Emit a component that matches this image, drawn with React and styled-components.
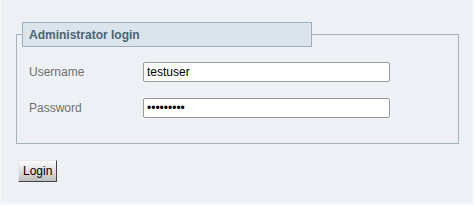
import React from 'react';
import styled, { createGlobalStyle } from 'styled-components';

const GlobalStyle = createGlobalStyle`
  html, body {
    margin: 0;
    padding: 0;
    background: #f5f7f9;
  }
  * {
    box-sizing: border-box;
  }
`;

const Page = styled.div`
  width: 471px;
  height: 202px;
  margin-left: 1px;
  padding: 22px 14px 0 15px;
  background: #edf1f5;
  font-family: 'Liberation Sans', Arial, sans-serif;
  font-size: 12px;
`;

const Fieldset = styled.fieldset`
  margin: 0;
  padding: 0;
  width: 443px;
  border: 1px solid #a3b2bd;
  min-inline-size: 0;
`;

const Legend = styled.legend`
  display: flex;
  align-items: center;
  width: 290px;
  height: 25px;
  margin-left: 5px;
  padding: 0 6px;
  background: #dbe4ea;
  border: 1px solid #9eafbb;
  color: #4a6476;
  font-weight: bold;
  font-size: 12px;
`;

const Form = styled.div`
  display: grid;
  grid-template-columns: 114px 247px;
  row-gap: 16px;
  align-items: center;
  padding: 15px 12px 25px;
`;

const Label = styled.label`
  color: #6f6f6f;
  font-size: 12px;
  margin-top: -1px;
`;

const Input = styled.input`
  width: 247px;
  height: 20px;
  margin: 0;
  padding: 0 3px;
  border: 1px solid #9a9a9a;
  border-radius: 2px;
  background: #fff;
  color: #000;
  font-family: 'Liberation Sans', Arial, sans-serif;
  font-size: 12px;
  outline: none;
`;

const Button = styled.button`
  display: block;
  margin: 16px 0 0 2px;
  height: 22px;
  padding: 0 4px;
  border: 1px solid;
  border-color: #e6e6e6 #444 #444 #e6e6e6;
  border-radius: 0;
  background: linear-gradient(#fbfbfb, #d9d9d9 60%, #bdbdbd);
  color: #000;
  font-family: 'Liberation Sans', Arial, sans-serif;
  font-size: 12px;
`;

export default function App() {
  return (
    <>
      <GlobalStyle />
      <Page>
        <Fieldset>
          <Legend>Administrator login</Legend>
          <Form>
            <Label htmlFor="username">Username</Label>
            <Input id="username" type="text" defaultValue="testuser" />
            <Label htmlFor="password">Password</Label>
            <Input id="password" type="password" defaultValue="testuser1" />
          </Form>
        </Fieldset>
        <Button type="button">Login</Button>
      </Page>
    </>
  );
}
